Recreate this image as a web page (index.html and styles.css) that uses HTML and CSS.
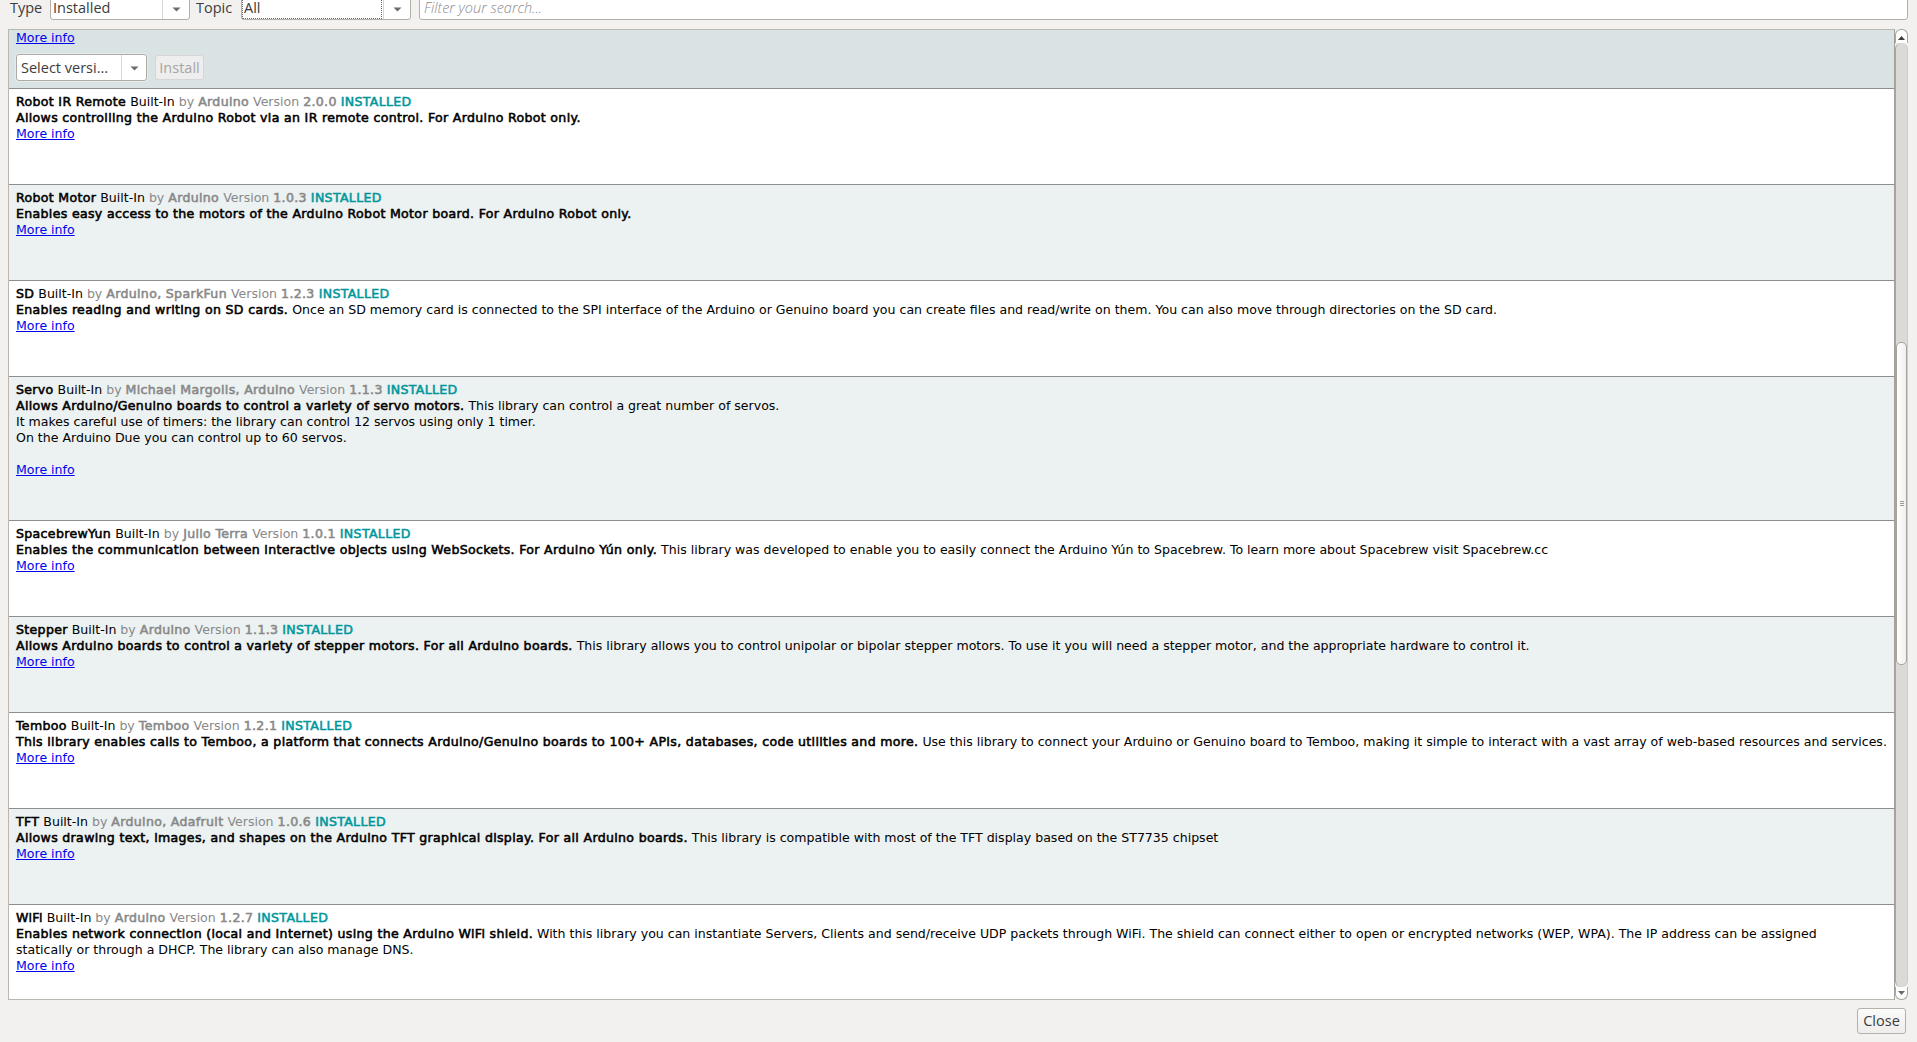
FILE: index.html
```html
<!DOCTYPE html>
<html>
<head>
<meta charset="utf-8">
<title>Library Manager</title>
<link rel="stylesheet" href="styles.css">
</head>
<body>
<div class="toolbar">
  <span class="label label-type">Type</span>
  <div class="combo combo-type">
    <span class="combo-text">Installed</span>
    <span class="combo-arrow"><svg width="9" height="5" viewBox="0 0 9 5"><path d="M0.5 0.5h8l-4 4z" fill="#6d6b67"/></svg></span>
  </div>
  <span class="label label-topic">Topic</span>
  <div class="combo combo-topic">
    <span class="combo-text focus">All</span>
    <span class="combo-arrow"><svg width="9" height="5" viewBox="0 0 9 5"><path d="M0.5 0.5h8l-4 4z" fill="#6d6b67"/></svg></span>
  </div>
  <div class="search"><span class="placeholder">Filter your search...</span></div>
</div>

<div class="panel">
  <div class="list">
    <div class="row row-selected">
      <div><a class="more" href="#">More info</a></div>
      <div class="actions">
        <div class="vcombo">
          <span class="vcombo-text">Select versi...</span>
          <span class="vcombo-arrow"><svg width="9" height="5" viewBox="0 0 9 5"><path d="M0.5 0.5h8l-4 4z" fill="#6d6b67"/></svg></span>
        </div>
        <div class="install">Install</div>
      </div>
    </div>

    <div class="row">
      <div><b>Robot IR Remote</b> Built-In <span class="meta">by <b>Arduino</b></span> <span class="meta">Version <b>2.0.0</b></span> <b class="installed">INSTALLED</b></div>
      <div><b>Allows controlling the Arduino Robot via an IR remote control. For Arduino Robot only.</b></div>
      <div><a class="more" href="#">More info</a></div>
    </div>

    <div class="row alt">
      <div><b>Robot Motor</b> Built-In <span class="meta">by <b>Arduino</b></span> <span class="meta">Version <b>1.0.3</b></span> <b class="installed">INSTALLED</b></div>
      <div><b>Enables easy access to the motors of the Arduino Robot Motor board. For Arduino Robot only.</b></div>
      <div><a class="more" href="#">More info</a></div>
    </div>

    <div class="row">
      <div><b>SD</b> Built-In <span class="meta">by <b>Arduino, SparkFun</b></span> <span class="meta">Version <b>1.2.3</b></span> <b class="installed">INSTALLED</b></div>
      <div><b>Enables reading and writing on SD cards.</b> Once an SD memory card is connected to the SPI interface of the Arduino or Genuino board you can create files and read/write on them. You can also move through directories on the SD card.</div>
      <div><a class="more" href="#">More info</a></div>
    </div>

    <div class="row alt">
      <div><b>Servo</b> Built-In <span class="meta">by <b>Michael Margolis, Arduino</b></span> <span class="meta">Version <b>1.1.3</b></span> <b class="installed">INSTALLED</b></div>
      <div><b>Allows Arduino/Genuino boards to control a variety of servo motors.</b> This library can control a great number of servos.<br>It makes careful use of timers: the library can control 12 servos using only 1 timer.<br>On the Arduino Due you can control up to 60 servos.<br><br></div>
      <div><a class="more" href="#">More info</a></div>
    </div>

    <div class="row">
      <div><b>SpacebrewYun</b> Built-In <span class="meta">by <b>Julio Terra</b></span> <span class="meta">Version <b>1.0.1</b></span> <b class="installed">INSTALLED</b></div>
      <div><b>Enables the communication between interactive objects using WebSockets. For Arduino Yún only.</b> This library was developed to enable you to easily connect the Arduino Yún to Spacebrew. To learn more about Spacebrew visit Spacebrew.cc</div>
      <div><a class="more" href="#">More info</a></div>
    </div>

    <div class="row alt">
      <div><b>Stepper</b> Built-In <span class="meta">by <b>Arduino</b></span> <span class="meta">Version <b>1.1.3</b></span> <b class="installed">INSTALLED</b></div>
      <div><b>Allows Arduino boards to control a variety of stepper motors. For all Arduino boards.</b> This library allows you to control unipolar or bipolar stepper motors. To use it you will need a stepper motor, and the appropriate hardware to control it.</div>
      <div><a class="more" href="#">More info</a></div>
    </div>

    <div class="row">
      <div><b>Temboo</b> Built-In <span class="meta">by <b>Temboo</b></span> <span class="meta">Version <b>1.2.1</b></span> <b class="installed">INSTALLED</b></div>
      <div><b>This library enables calls to Temboo, a platform that connects Arduino/Genuino boards to 100+ APIs, databases, code utilities and more.</b> Use this library to connect your Arduino or Genuino board to Temboo, making it simple to interact with a vast array of web-based resources and services.</div>
      <div><a class="more" href="#">More info</a></div>
    </div>

    <div class="row alt">
      <div><b>TFT</b> Built-In <span class="meta">by <b>Arduino, Adafruit</b></span> <span class="meta">Version <b>1.0.6</b></span> <b class="installed">INSTALLED</b></div>
      <div><b>Allows drawing text, images, and shapes on the Arduino TFT graphical display. For all Arduino boards.</b> This library is compatible with most of the TFT display based on the ST7735 chipset</div>
      <div><a class="more" href="#">More info</a></div>
    </div>

    <div class="row">
      <div><b>WiFi</b> Built-In <span class="meta">by <b>Arduino</b></span> <span class="meta">Version <b>1.2.7</b></span> <b class="installed">INSTALLED</b></div>
      <div><b>Enables network connection (local and Internet) using the Arduino WiFi shield.</b> With this library you can instantiate Servers, Clients and send/receive UDP packets through WiFi. The shield can connect either to open or encrypted networks (WEP, WPA). The IP address can be assigned<br>statically or through a DHCP. The library can also manage DNS.</div>
      <div><a class="more" href="#">More info</a></div>
    </div>
  </div>

  <div class="scrollbar">
    <div class="sb-up"><svg width="7" height="4" viewBox="0 0 7 4"><path d="M0 4h7L3.5 0z" fill="#3c3c3c"/></svg></div>
    <div class="sb-track">
      <div class="sb-thumb"><span class="grip"></span><span class="grip"></span><span class="grip"></span></div>
    </div>
    <div class="sb-down"><svg width="7" height="4" viewBox="0 0 7 4"><path d="M0 0h7L3.5 4z" fill="#6a6a6a"/></svg></div>
  </div>
</div>

<div class="footer">
  <div class="btn-close">Close</div>
</div>
</body>
</html>
```

FILE: styles.css
```css
html, body {
  margin: 0;
  padding: 0;
}
body {
  width: 1917px;
  height: 1042px;
  overflow: hidden;
  background: #f2f1f0;
  font-family: "DejaVu Sans", sans-serif;
}

/* ---------- toolbar ---------- */
.toolbar {
  display: flex;
  align-items: flex-end;
  height: 20px;
  padding-left: 10px;
  font-family: "Open Sans", "DejaVu Sans", sans-serif;
  font-size: 14.5px;
  color: #3c3c3c;
}
.label {
  box-sizing: border-box;
  line-height: 16px;
  padding-bottom: 4px;
  flex: none;
}
.label-type { width: 40px; }
.label-topic { width: 51px; padding-left: 6px; }

.combo {
  flex: none;
  box-sizing: border-box;
  height: 30px;
  display: flex;
  align-items: stretch;
  background: #fff;
  border: 1px solid #b3afa9;
  border-radius: 0 0 3px 3px;
}
.combo-type { width: 140px; }
.combo-topic { width: 170px; margin-right: 8px; }
.combo-text {
  flex: 1;
  display: flex;
  align-items: flex-end;
  line-height: 16px;
  padding: 0 0 3px 2px;
}
.combo-text.focus {
  outline: 1px dotted #6a6a6a;
  outline-offset: -1px;
  padding-left: 2px;
  margin: 0 1px 0 0;
}
.combo-arrow {
  flex: none;
  width: 26px;
  border-left: 1px solid #d9d6d1;
  display: flex;
  align-items: flex-end;
  justify-content: center;
  padding-bottom: 7px;
}

.search {
  flex: 1;
  box-sizing: border-box;
  height: 30px;
  margin-right: 9px;
  background: #fff;
  border: 1px solid #b3afa9;
  border-radius: 0 0 3px 3px;
  display: flex;
  align-items: flex-end;
  padding: 0 0 3px 4px;
}
.placeholder {
  font-style: italic;
  color: #8b8b8b;
  line-height: 16px;
  font-weight: 300;
}

/* ---------- list panel ---------- */
.panel {
  display: flex;
  margin: 9px 0 0 8px;
  height: 971px;
}
.list {
  box-sizing: border-box;
  width: 1887px;
  height: 971px;
  overflow: hidden;
  background: #fff;
  border: 1px solid #bab6b0;
  border-right-color: #a3a09b;
}

.row {
  padding: 5px 7px 42px;
  border-bottom: 1px solid #8e8e8e;
  font-size: 12.55px;
  line-height: 16px;
  white-space: nowrap;
  color: #000;
  background: #fff;
}
.row.alt { background: #ecf1f1; }
.row b {
  font-weight: normal;
  -webkit-text-stroke: 0.55px currentColor;
  letter-spacing: 0.33px;
}
.meta { color: #888; }
.installed { color: #00979c; }
.more {
  color: #0000ee;
  text-decoration: underline;
}

.row-selected {
  background: #dae3e3;
  padding: 0 7px 7px;
}
.actions {
  display: flex;
  align-items: flex-start;
  margin-top: 8px;
  font-family: "Open Sans", "DejaVu Sans", sans-serif;
  font-size: 14.5px;
}
.vcombo {
  box-sizing: border-box;
  width: 131px;
  height: 27px;
  display: flex;
  background: #fff;
  border: 1px solid #aeaaa4;
  border-radius: 3px;
  box-shadow: 0 0 0 1px #e6ebeb;
  color: #3c3c3c;
}
.vcombo-text {
  flex: 1;
  line-height: 25px;
  padding-left: 4px;
}
.vcombo-arrow {
  flex: none;
  width: 24px;
  border-left: 1px solid #d9d6d1;
  display: flex;
  align-items: center;
  justify-content: center;
  padding-top: 1px;
}
.install {
  box-sizing: border-box;
  margin: 1px 0 0 8px;
  width: 49px;
  height: 25px;
  line-height: 23px;
  text-align: center;
  color: #a5a5a5;
  background: #eeeeee;
  border: 1px solid #d6d6d4;
  border-radius: 3px;
}

/* ---------- scrollbar ---------- */
.scrollbar {
  width: 13px;
  height: 971px;
  display: flex;
  flex-direction: column;
}
.sb-up, .sb-down {
  box-sizing: border-box;
  flex: none;
  display: flex;
  align-items: center;
  justify-content: center;
  background: #fdfdfd;
  border: 1px solid #a8a5a0;
}
.sb-up {
  height: 14px;
  border-bottom: none;
  border-radius: 6px 6px 0 0;
  padding-top: 2px;
}
.sb-down {
  height: 13px;
  border-top: none;
  border-radius: 0 0 6px 6px;
}
.sb-track {
  flex: 1;
  box-sizing: border-box;
  background: #dcdad6;
  border-left: 1px solid #a8a5a0;
  border-right: 1px solid #cfccc7;
  border-radius: 6px;
}
.sb-thumb {
  box-sizing: border-box;
  margin-top: 299px;
  height: 323px;
  border: 1px solid #a6a39e;
  border-radius: 5px;
  background: linear-gradient(to right, #fefefe, #f1f0ee);
  display: flex;
  flex-direction: column;
  align-items: center;
  justify-content: center;
  gap: 1px;
}
.grip {
  display: block;
  width: 4px;
  height: 1px;
  background: #9d9a95;
}

/* ---------- footer ---------- */
.footer {
  display: flex;
  justify-content: flex-end;
  padding: 8px 11px 0 0;
}
.btn-close {
  box-sizing: border-box;
  width: 49px;
  height: 26px;
  line-height: 24px;
  text-align: center;
  font-family: "Open Sans", "DejaVu Sans", sans-serif;
  font-size: 14.5px;
  color: #3c3c3c;
  border: 1px solid #b4b0aa;
  border-radius: 3px;
  background: linear-gradient(to bottom, #fbfbfa, #eeedeb);
}
```
